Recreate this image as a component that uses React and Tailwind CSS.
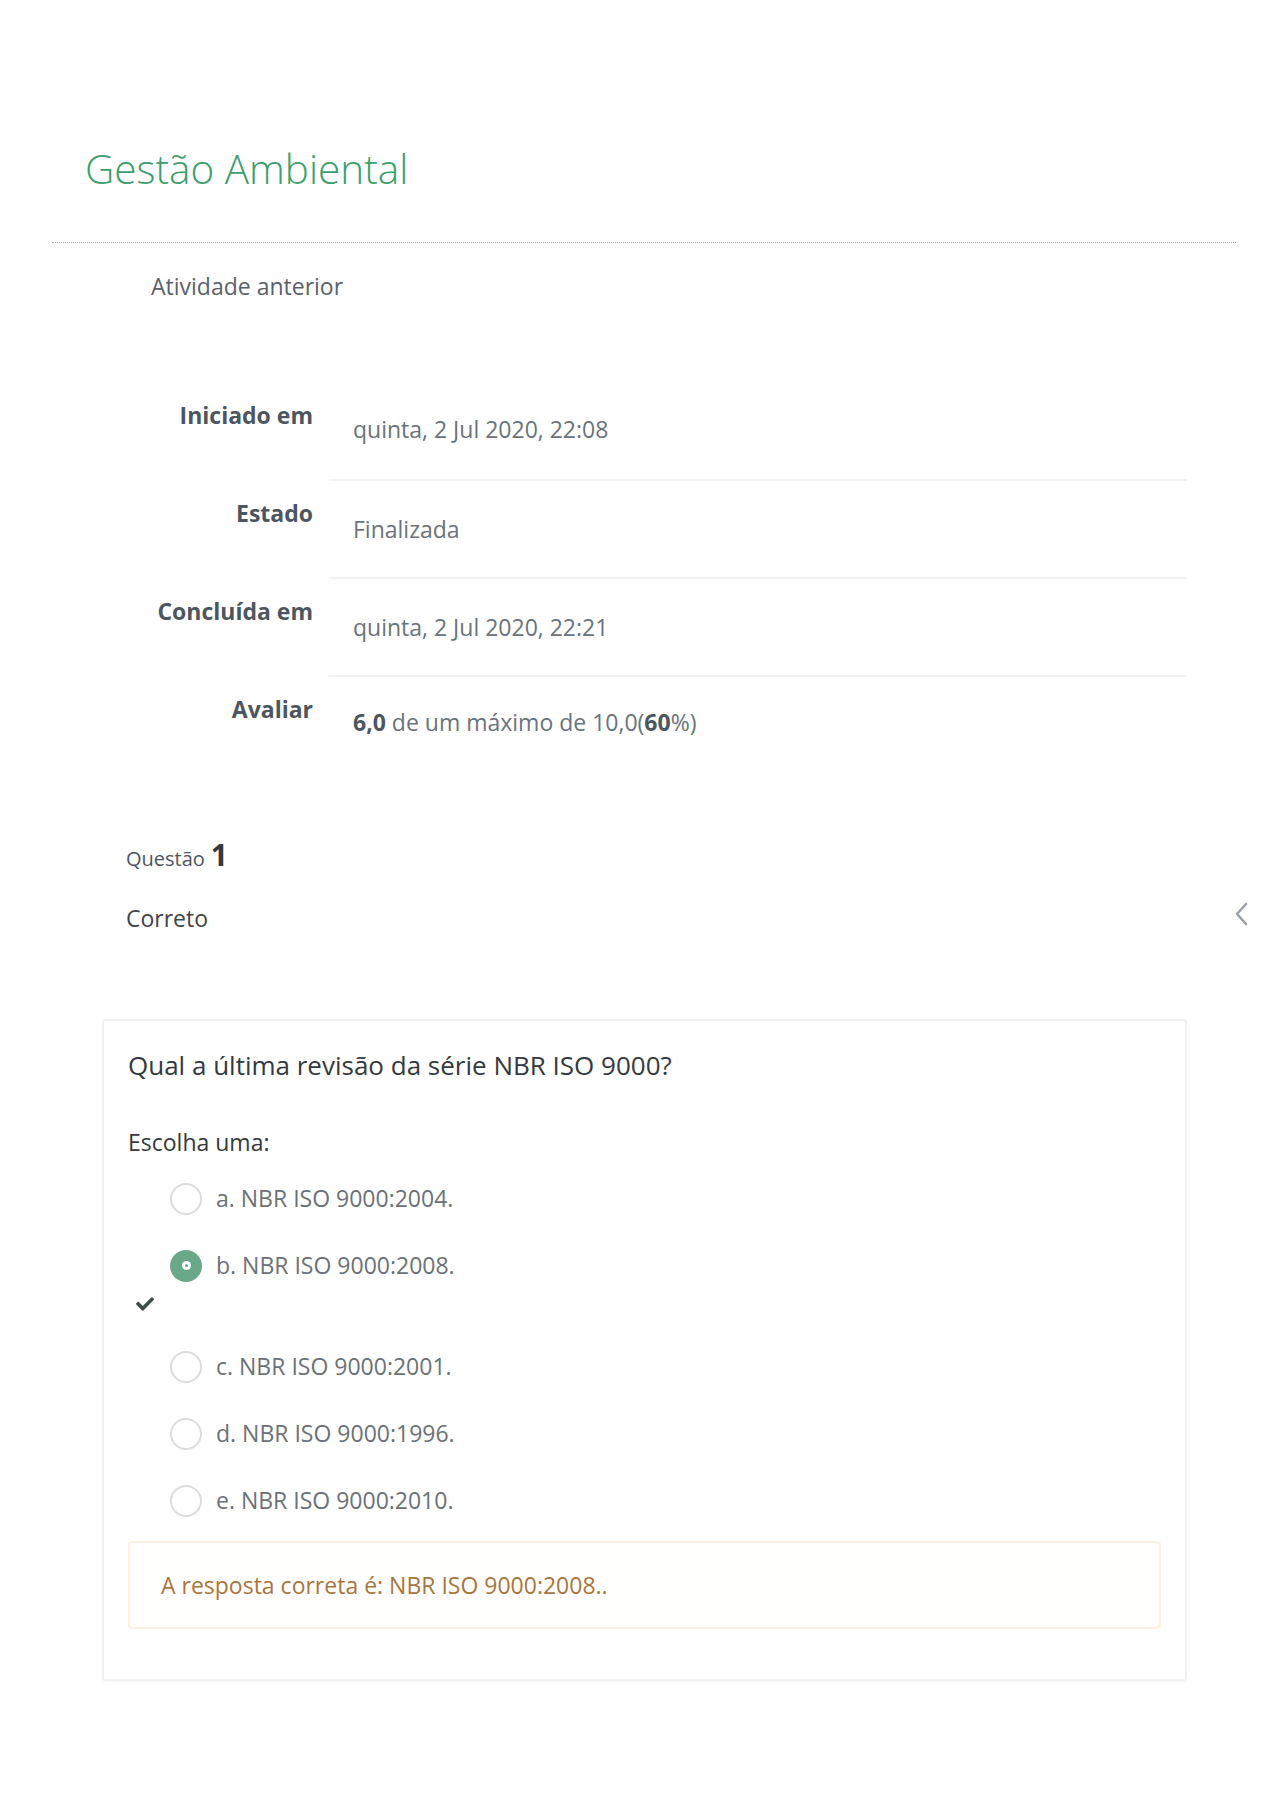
import React from 'react';
import { FaCheck } from 'react-icons/fa';

const rows = [
  { label: 'Iniciado em', value: 'quinta, 2 Jul 2020, 22:08' },
  { label: 'Estado', value: 'Finalizada' },
  { label: 'Concluída em', value: 'quinta, 2 Jul 2020, 22:21' },
];

const options = [
  { key: 'a', text: 'a. NBR ISO 9000:2004.' },
  { key: 'b', text: 'b. NBR ISO 9000:2008.', checked: true },
  { key: 'c', text: 'c. NBR ISO 9000:2001.' },
  { key: 'd', text: 'd. NBR ISO 9000:1996.' },
  { key: 'e', text: 'e. NBR ISO 9000:2010.' },
];

function Radio({ checked }) {
  if (checked) {
    return (
      <span className="flex h-[32px] w-[32px] shrink-0 items-center justify-center rounded-full bg-[#6aa88a]">
        <span className="flex h-[9px] w-[9px] items-center justify-center rounded-full bg-white">
          <span className="h-[3px] w-[3px] rounded-full bg-[#6aa88a]"></span>
        </span>
      </span>
    );
  }
  return <span className="h-[32px] w-[32px] shrink-0 rounded-full border-2 border-[#dcdcdc] bg-white"></span>;
}

export default function App() {
  return (
    <div className="min-h-[1811px] bg-white font-['Open_Sans',sans-serif] text-[23px] text-[#495057]">
      <div className="ml-[52px] mr-[44px] pt-[145px]">
        {/* Header */}
        <h1 className="pl-[33px] text-[40.5px] font-light leading-[48px] text-[#3d9e6d]">Gestão Ambiental</h1>
        <div className="mt-[49px] border-t border-dotted border-[#a9a9a9]"></div>
        <div className="mt-[28px] pl-[99px] leading-[30px] text-[#5b6168]">Atividade anterior</div>

        {/* Summary table */}
        <div className="mt-[80px] mr-[49px]">
          {rows.map((r, i) => (
            <div key={r.label} className="flex h-[98px]">
              <div className="w-[277px] shrink-0 pt-[19px] pr-[16px] text-right font-bold leading-[30px] text-[#4d565e]">
                {r.label}
              </div>
              <div className={`flex-1 pl-[24px] pt-[33px] leading-[30px] text-[#6a737b] ${i > 0 ? 'border-t-2 border-[#f1f2f4]' : ''}`}>
                {r.value}
              </div>
            </div>
          ))}
          <div className="flex h-[98px]">
            <div className="w-[277px] shrink-0 pt-[19px] pr-[16px] text-right font-bold leading-[30px] text-[#4d565e]">Avaliar</div>
            <div className="flex-1 border-t-2 border-[#f1f2f4] pl-[24px] pt-[30px] leading-[30px] text-[#6a737b]">
              <b className="text-[#4d565e]">6,0</b> de um máximo de 10,0(<b className="text-[#4d565e]">60</b>%)
            </div>
          </div>
        </div>

        {/* Question info */}
        <div className="mt-[64px] flex items-start justify-between pl-[74px]">
          <div>
            <div className="flex items-baseline gap-[6px] leading-[36px]">
              <span className="text-[20px] text-[#4d565e]">Questão</span>
              <span className="text-[30px] font-bold text-[#343a40]">1</span>
            </div>
            <div className="mt-[26px] leading-[30px] text-[#3f454b]">Correto</div>
          </div>
          <svg className="mt-[64px] mr-[-14px]" width="16" height="26" viewBox="0 0 16 26" fill="none">
            <polyline points="12,3 3,13 12,23" stroke="#9aa0a6" strokeWidth="2.6" strokeLinecap="round" strokeLinejoin="round" />
          </svg>
        </div>

        {/* Question card */}
        <div className="mt-[86px] mr-[49px] ml-[50px] rounded-[4px] border-2 border-[#f2f2f2] px-[24px] pt-[26px] pb-[50px] shadow-[0_1px_2px_rgba(0,0,0,0.04)]">
          <div className="text-[26px] leading-[36px] text-[#343a40]">Qual a última revisão da série NBR ISO 9000?</div>
          <div className="mt-[44px] leading-[30px] text-[#343a40]">Escolha uma:</div>
          <div className="mt-[8px]">
            {options.map((o) => (
              <div key={o.key}>
                <div className="flex h-[67px] items-center gap-[14px] pl-[42px]">
                  <Radio checked={o.checked} />
                  <span className="text-[#6b7177]">{o.text}</span>
                </div>
                {o.checked && (
                  <div className="flex h-[34px] items-start pl-[8px]">
                    <FaCheck className="mt-[-4px] text-[18px] text-[#3e4d4a]" />
                  </div>
                )}
              </div>
            ))}
          </div>
          <div className="mt-[7px] rounded-[4px] border-2 border-[#fdf1e2] bg-[#fffefc] px-[31px] py-[26px] leading-[32px] text-[#a8763f]">
            A resposta correta é: NBR ISO 9000:2008..
          </div>
        </div>
      </div>
    </div>
  );
}
